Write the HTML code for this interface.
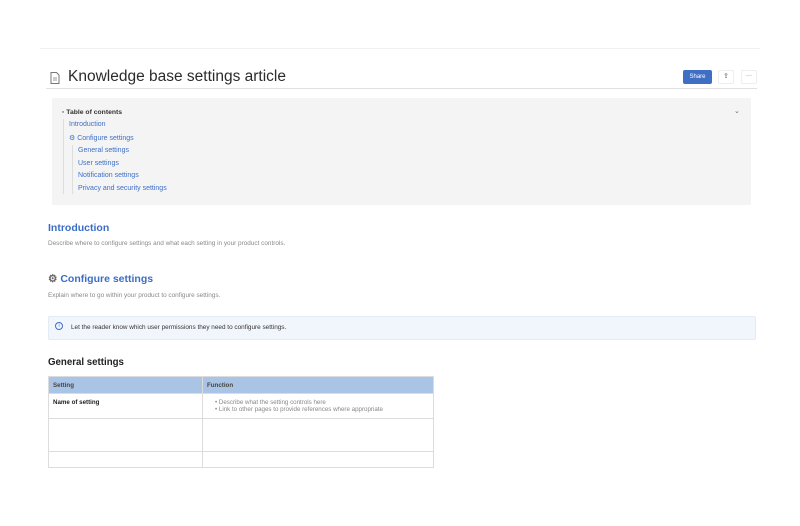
<!DOCTYPE html>
<html><head><meta charset="utf-8"><style>
*{margin:0;padding:0;box-sizing:border-box}
body{width:800px;height:526px;background:#fff;font-family:"Liberation Sans",sans-serif;position:relative;overflow:hidden}
.a{position:absolute;white-space:nowrap}
.toc{color:#3d6fc9;font-size:7px}
.h{color:#3b6dc6;font-weight:bold}
.d{color:#8a8a8a;font-size:6.4px}
td{border:1px solid #dcdcdc;vertical-align:top;font-size:6.2px;padding:4px}
</style></head><body>
<div class="a" style="left:40px;top:48px;width:720px;height:1px;background:#f0f0f0"></div>
<svg class="a" style="left:50px;top:72px" width="10" height="12" viewBox="0 0 10 12"><path d="M1 .5h5.5l2.5 2.5v8.5h-8z" fill="#fff" stroke="#777" stroke-width="1"/><path d="M3 6h4M3 8h4" stroke="#777" stroke-width=".8"/></svg>
<div class="a" style="left:68px;top:68px;font-size:15.5px;color:#2b2b2b">Knowledge base settings article</div>
<div class="a" style="left:46px;top:88px;width:711px;height:1px;background:#e0e0e0"></div>
<div class="a" style="left:683px;top:70px;width:29px;height:14px;background:#3f6fc4;border-radius:2px;color:#fff;font-size:6px;text-align:center;line-height:14px">Share</div>
<div class="a" style="left:718px;top:70px;width:16px;height:14px;border:1px solid #eee;border-radius:2px;font-size:7px;text-align:center;line-height:12px;color:#555">⇪</div>
<div class="a" style="left:741px;top:70px;width:16px;height:14px;border:1px solid #eee;border-radius:2px;font-size:6px;text-align:center;line-height:11px;color:#555">···</div>
<div class="a" style="left:52px;top:98px;width:699px;height:107px;background:#f4f4f4"></div>
<div class="a" style="left:734px;top:107px;font-size:7px;color:#666">⌄</div>
<div class="a" style="left:62px;top:109px;font-size:6.8px;font-weight:bold;color:#333">▫ Table of contents</div>
<div class="a" style="left:63px;top:119px;width:1px;height:75px;background:#ddd"></div>
<div class="a" style="left:72px;top:145px;width:1px;height:49px;background:#ddd"></div>
<div class="a toc" style="left:69px;top:121px">Introduction</div>
<div class="a toc" style="left:69px;top:134px">⚙ Configure settings</div>
<div class="a toc" style="left:78px;top:147px">General settings</div>
<div class="a toc" style="left:78px;top:160px">User settings</div>
<div class="a toc" style="left:78px;top:172px">Notification settings</div>
<div class="a toc" style="left:78px;top:185px">Privacy and security settings</div>
<div class="a h" style="left:48px;top:222px;font-size:10.5px">Introduction</div>
<div class="a d" style="left:48px;top:240px">Describe where to configure settings and what each setting in your product controls.</div>
<div class="a h" style="left:48px;top:273px;font-size:10.5px"><span style="color:#666">⚙</span> Configure settings</div>
<div class="a d" style="left:48px;top:292px">Explain where to go within your product to configure settings.</div>
<div class="a" style="left:48px;top:316px;width:708px;height:24px;background:#f1f6fc;border:1px solid #e3ebf5;border-radius:2px"></div>
<div class="a" style="left:55px;top:322px;width:8px;height:8px;border:1px solid #3f6fc4;border-radius:50%;font-size:5px;color:#3f6fc4;text-align:center;line-height:6px">i</div>
<div class="a" style="left:71px;top:324px;font-size:6.4px;color:#333">Let the reader know which user permissions they need to configure settings.</div>
<div class="a" style="left:48px;top:357px;font-size:9.7px;font-weight:bold;color:#222">General settings</div>
<table class="a" style="left:48px;top:376px;width:386px;border-collapse:collapse">
<tr style="height:16px;background:#a9c4e4"><td style="width:154px;font-weight:bold;color:#444;padding-top:5px">Setting</td><td style="font-weight:bold;color:#444;padding-top:5px">Function</td></tr>
<tr style="height:25px"><td style="font-weight:bold;color:#222;padding-top:5px">Name of setting</td><td style="color:#888;padding-left:12px;padding-top:5px">• Describe what the setting controls here<br>• Link to other pages to provide references where appropriate</td></tr>
<tr style="height:33px"><td></td><td></td></tr>
<tr style="height:16px"><td></td><td></td></tr>
</table>
</body></html>
